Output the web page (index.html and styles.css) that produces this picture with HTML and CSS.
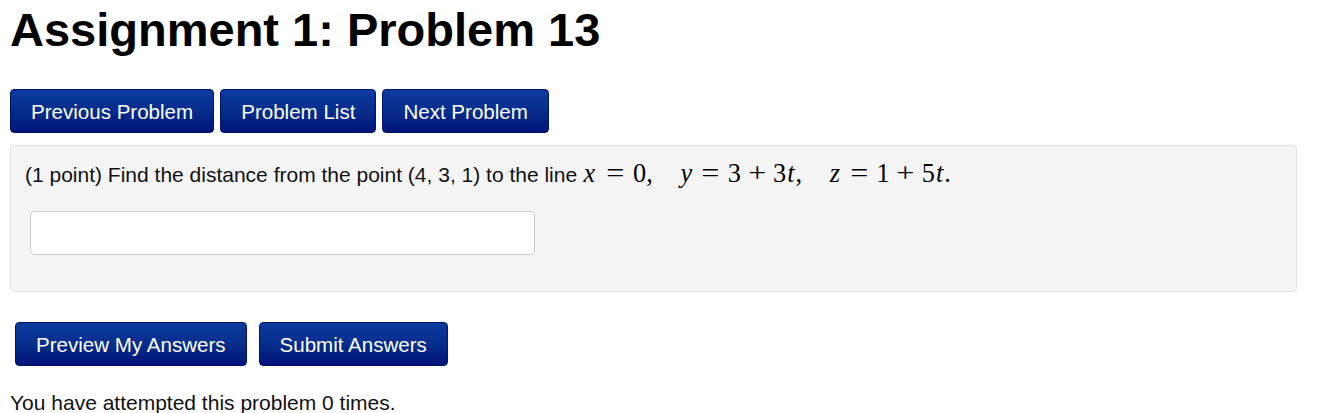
FILE: index.html
```html
<!DOCTYPE html>
<html>
<head>
<meta charset="utf-8">
<link rel="stylesheet" href="styles.css">
</head>
<body>
<div class="page">
  <h1 class="title">Assignment 1: Problem 13</h1>
  <div class="nav">
    <a class="btn">Previous Problem</a>
    <a class="btn">Problem List</a>
    <a class="btn">Next Problem</a>
  </div>
  <div class="problem">
    <p class="statement">(1 point) Find the distance from the point (4, 3, 1) to the line <span class="math"><span class="mi vx">x</span><span class="mo rel">=</span><span class="mn">0</span><span class="mp">,</span><span class="quad"></span><span class="mi vy">y</span><span class="mo rel">=</span><span class="mn">3</span><span class="mo bin">+</span><span class="mn">3</span><span class="mi vt">t</span><span class="mp">,</span><span class="quad"></span><span class="mi vz">z</span><span class="mo rel">=</span><span class="mn">1</span><span class="mo bin">+</span><span class="mn">5</span><span class="mi vt">t</span><span class="mp">.</span></span></p>
    <div class="answer"><input class="field" type="text"></div>
  </div>
  <div class="submit">
    <a class="btn">Preview My Answers</a>
    <a class="btn">Submit Answers</a>
  </div>
  <p class="attempts">You have attempted this problem 0 times.</p>
</div>
</body>
</html>
```
FILE: styles.css
```css
html, body {
  margin: 0;
  padding: 0;
  background: #fff;
}
.page {
  padding: 3px 29px 0 10px;
  font-family: "Liberation Sans", Arial, sans-serif;
  color: #111;
}
.title {
  margin: 0;
  font-size: 47px;
  line-height: 54px;
  font-weight: bold;
  color: #000;
}
.nav {
  display: flex;
  gap: 6px;
  margin-top: 32px;
}
.btn {
  display: inline-flex;
  align-items: center;
  height: 44px;
  box-sizing: border-box;
  padding: 1px 20px 0 20px;
  font-size: 20.55px;
  color: #fff;
  background: linear-gradient(to bottom, #0b3a9e 0%, #062d8c 50%, #00137a 100%);
  border: 1px solid #001466;
  border-radius: 4px;
  text-decoration: none;
}
.problem {
  margin-top: 12px;
  background: #f5f5f5;
  border: 1px solid #e3e3e3;
  border-radius: 4px;
  padding: 14px 14px 35px 14px;
  height: 147px;
  box-sizing: border-box;
}
.statement {
  margin: 0;
  font-size: 21px;
  line-height: 30px;
  color: #111;
}
.math {
  font-family: "Liberation Serif", "Times New Roman", serif;
  font-size: 26.3px;
  line-height: 1;
  color: #000;
}
.mi, .mo, .mn, .mp {
  display: inline-block;
}
.mi {
  font-style: italic;
}
.vx { width: 0.572em; padding-left: 0.02em; box-sizing: border-box; }
.vy { width: 0.49em; padding-left: 0.03em; box-sizing: border-box; }
.vz { width: 0.465em; padding-left: 0.02em; box-sizing: border-box; }
.vt { width: 0.361em; padding-left: 0.04em; box-sizing: border-box; }
.mn {
  width: 0.5em;
  text-align: center;
}
.mp {
  width: 0.278em;
}
.mo {
  width: 0.778em;
  text-align: center;
  transform: scaleX(1.22);
}
.rel {
  margin: 0 0.278em;
}
.bin {
  margin: 0 0.222em;
}
.quad {
  display: inline-block;
  width: 1em;
}
.answer {
  margin-top: 21px;
  padding-left: 5px;
}
.field {
  display: block;
  width: 505px;
  height: 44px;
  box-sizing: border-box;
  background: #fff;
  border: 1px solid #ccc;
  border-radius: 4px;
  margin: 0;
  padding: 0 8px;
}
.submit {
  display: flex;
  gap: 12px;
  margin-top: 30px;
  padding-left: 5px;
}
.attempts {
  margin: 25px 0 0 0;
  font-size: 21px;
  line-height: 24px;
}
```
